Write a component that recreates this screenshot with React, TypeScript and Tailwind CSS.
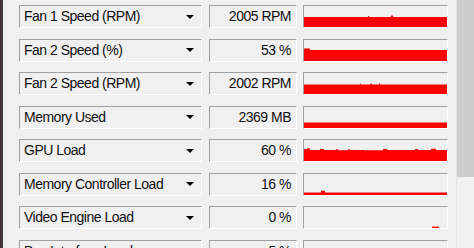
import React from 'react'

// Sensor rows, graph paths are in the inner box space (143 x 21)
const sensors = [
  {
    name: 'Fan 1 Speed (RPM)',
    value: '2005 RPM',
    graph: 'M0 21 V11 H64 V10 H65 V11 H87 V9.5 H89 V11 H143 V21 Z',
  },
  {
    name: 'Fan 2 Speed (%)',
    value: '53 %',
    graph: 'M0 21 V8.5 H6 V10 H143 V21 Z',
  },
  {
    name: 'Fan 2 Speed (RPM)',
    value: '2002 RPM',
    graph: 'M0 21 V11.5 H56 V10.8 H57 V11.5 H66 V10.8 H68 V11.5 H75 V10.5 H76 V11.5 H143 V21 Z',
  },
  {
    name: 'Memory Used',
    value: '2369 MB',
    graph: 'M0 21 V15.5 H143 V21 Z',
  },
  {
    name: 'GPU Load',
    value: '60 %',
    graph:
      'M0 21 V9 H3 V8.3 H6 V10 H16 V9 H20 V10 H32 V9.2 H34 V10.2 H44 V9.3 H46 V10 H60 V10.3 H79 V9 H83 V10 H111 V9 H114 V10 H127 V8.8 H132 V10 H143 V21 Z',
  },
  {
    name: 'Memory Controller Load',
    value: '16 %',
    graph: 'M0 21 V18.5 H17 V16.8 H21 V18.5 H143 V21 Z',
  },
  {
    name: 'Video Engine Load',
    value: '0 %',
    graph: 'M128 21 V19.6 H135 V21 Z',
  },
  {
    name: 'Bus Interface Load',
    value: '5 %',
    graph: '',
  },
]

const sunken = 'border border-t-[#a0a0a0] border-l-[#a0a0a0] border-r-white border-b-white'

function SensorRow({ name, value, graph }: { name: string; value: string; graph: string }) {
  return (
    <div className="flex h-[23px] shrink-0">
      {/* Sensor name with dropdown */}
      <div className={`flex w-[183px] items-center justify-between pl-[4px] pr-[7px] ${sunken}`}>
        <span className="whitespace-nowrap">{name}</span>
        <svg width="8" height="4" viewBox="0 0 8 4">
          <path d="M0 0H8L4 4Z" fill="#000" />
        </svg>
      </div>

      {/* Current reading */}
      <div className={`ml-[7px] flex w-[88px] items-center justify-end pr-[5px] ${sunken}`}>
        <span className="whitespace-nowrap">{value}</span>
      </div>

      {/* History graph */}
      <div className={`ml-[6px] w-[145px] ${sunken}`}>
        <svg className="block h-full w-full" viewBox="0 0 143 21" preserveAspectRatio="none">
          {graph && <path d={graph} fill="#ff0000" />}
        </svg>
      </div>
    </div>
  )
}

export default function App() {
  return (
    <div className="flex h-[248px] w-[474px] overflow-hidden bg-[#f0f0f0] font-['Liberation_Sans',Arial,sans-serif] text-[14px] tracking-[-0.5px] text-[#111]">
      <div className="w-[3px] shrink-0 bg-[#46363a]" />

      <div className="flex flex-1 flex-col gap-[10.57px] pl-[16px] pr-[8px] pt-[5px]">
        {sensors.map(s => (
          <SensorRow key={s.name} {...s} />
        ))}
      </div>

      {/* Scrollbar */}
      <div className="flex w-[18px] shrink-0 flex-col border-l border-[#e6e6e6]">
        <div className="h-[177px] bg-[#cdcdcd]" />
        <div className="flex-1 bg-[#f0f0f0]" />
      </div>
    </div>
  )
}
